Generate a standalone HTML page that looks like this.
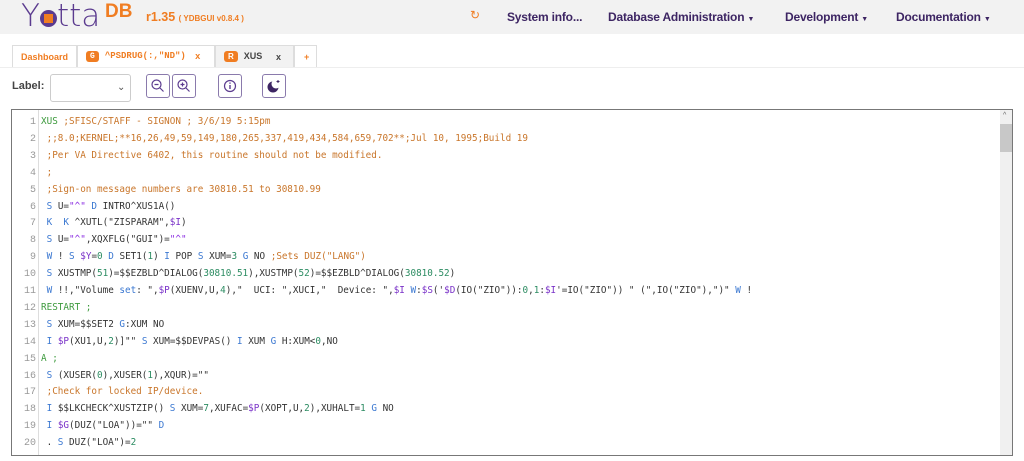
<!DOCTYPE html>
<html><head><style>
*{margin:0;padding:0;box-sizing:border-box}
body{width:1024px;height:461px;background:#fff;font-family:"Liberation Sans",sans-serif;position:relative;overflow:hidden}
.hdr{position:absolute;left:0;top:0;width:1024px;height:34px;background:#f2f2f2}
.logo{position:absolute;left:21px;top:-2px;font-size:31px;color:#5b3b8f;font-family:"DejaVu Sans",sans-serif;font-weight:300;letter-spacing:0px}
.db{position:absolute;left:105px;top:1px;font-size:19px;font-weight:bold;color:#f07d22}
.ver{position:absolute;left:146px;top:10px;font-size:12.5px;font-weight:bold;color:#f07d22}
.ver small{font-size:8px}
.nav{position:absolute;top:10px;font-size:12px;font-weight:bold;color:#3d2563;letter-spacing:-0.2px}
.car{font-size:7px}
.tab{position:absolute;top:45px;height:23px;border:1px solid #ddd;border-bottom:none;font-size:9px;font-weight:bold;color:#f07d22;background:#fff}
.badge{display:inline-block;background:#f07d22;color:#fff;border-radius:3px;font-size:8px;padding:1px 4px;margin-right:6px}
.btn{position:absolute;top:74px;width:24px;height:24px;border:1px solid #8a7aac;border-radius:3px;background:#fff}
.ed{position:absolute;left:11px;top:109px;width:1002px;height:347px;border:1px solid #777}
.gut{position:absolute;left:0;top:0;width:27px;height:100%;border-right:1px solid #ddd;background:#fff}
.ln{position:absolute;left:0;width:24px;text-align:right;font:10px "Liberation Mono",monospace;color:#999;margin-top:1px}
.cd{position:absolute;left:29px;font:9.3px "DejaVu Sans Mono","Liberation Mono",monospace;color:#333;white-space:pre}
.k{color:#3b78d1}.c{color:#c9762b}.l{color:#3d9a3d}.n{color:#2c8c62}.v{color:#7a32c8}.s{color:#8a2be2}
</style></head><body>
<div class="hdr">
<div class="logo">Y<span style="display:inline-block;width:17px;height:17px;background:#5b3b8f;border-radius:50%;vertical-align:-1px;position:relative"><span style="position:absolute;left:4px;top:4px;width:9px;height:9px;background:#f07d22"></span></span>tta</div>
<div class="db">DB</div>
<div class="ver">r1.35 <small>( YDBGUI v0.8.4 )</small></div>
<div class="nav" style="left:470px;color:#f07d22;font-weight:normal;top:8px">↻</div>
<div class="nav" style="left:507px">System info...</div>
<div class="nav" style="left:608px">Database Administration <span class="car">▼</span></div>
<div class="nav" style="left:785px">Development <span class="car">▼</span></div>
<div class="nav" style="left:896px">Documentation <span class="car">▼</span></div>
</div>
<div class="tab" style="left:12px;width:65px;padding:6px 0 0 8px">Dashboard</div>
<div class="tab" style="left:77px;width:138px;padding:5px 0 0 8px;font-family:'Liberation Mono',monospace"><span class="badge">G</span>^PSDRUG(:,"ND")<span style="position:absolute;left:117px;top:6px">x</span></div>
<div class="tab" style="left:215px;width:79px;padding:5px 0 0 8px;background:#f2f2f2;color:#444"><span class="badge">R</span>XUS<span style="position:absolute;left:60px;top:6px">x</span></div>
<div class="tab" style="left:294px;width:23px;padding:6px 0 0 9px">+</div>
<div style="position:absolute;left:0;top:67px;width:1024px;border-top:1px solid #eee"></div>
<div style="position:absolute;left:12px;top:80px;font-size:11px;font-weight:bold;color:#444">Label:</div>
<div style="position:absolute;left:50px;top:74px;width:81px;height:28px;border:1px solid #ccc;border-radius:3px;font-size:10px;color:#555;padding:7px 0 0 66px">⌄</div>
<div class="btn" style="left:146px"><svg width="22" height="22"><circle cx="9.5" cy="9.5" r="4.5" fill="none" stroke="#5b3b8f" stroke-width="1.2"/><path d="M7.5 9.5h4M13 13l3.5 3.5" stroke="#5b3b8f" stroke-width="1.2"/></svg></div>
<div class="btn" style="left:172px"><svg width="22" height="22"><circle cx="9.5" cy="9.5" r="4.5" fill="none" stroke="#5b3b8f" stroke-width="1.2"/><path d="M7.5 9.5h4M9.5 7.5v4M13 13l3.5 3.5" stroke="#5b3b8f" stroke-width="1.2"/></svg></div>
<div class="btn" style="left:218px"><svg width="22" height="22"><circle cx="11" cy="11" r="5.5" fill="none" stroke="#5b3b8f" stroke-width="1.2"/><path d="M11 10v4M11 7.5v1.3" stroke="#5b3b8f" stroke-width="1.4"/></svg></div>
<div class="btn" style="left:262px"><svg width="22" height="22"><circle cx="10" cy="12" r="5.5" fill="#3d2563"/><circle cx="13" cy="9" r="4.5" fill="#fff"/><path d="M15 5v3M13.5 6.5h3" stroke="#3d2563" stroke-width="1"/></svg></div>
<div class="ed">
<div class="gut"></div>
<div style="position:absolute;right:0;top:0;width:12px;height:100%;background:#f0f0f0"><div style="position:absolute;top:2px;left:3px;font-size:7px;color:#666">^</div><div style="position:absolute;top:14px;left:0;width:12px;height:28px;background:#c8c8c8"></div></div>
<div id="c"></div>
</div>
<script>
var L=[
'<span class="l">XUS</span> <span class="c">;SFISC/STAFF - SIGNON ; 3/6/19 5:15pm</span>',
' <span class="c">;;8.0;KERNEL;**16,26,49,59,149,180,265,337,419,434,584,659,702**;Jul 10, 1995;Build 19</span>',
' <span class="c">;Per VA Directive 6402, this routine should not be modified.</span>',
' <span class="c">;</span>',
' <span class="c">;Sign-on message numbers are 30810.51 to 30810.99</span>',
' <span class="k">S</span> U=<span class="s">"^"</span> <span class="k">D</span> INTRO^XUS1A()',
' <span class="k">K</span>  <span class="k">K</span> ^XUTL("ZISPARAM",<span class="v">$I</span>)',
' <span class="k">S</span> U=<span class="s">"^"</span>,XQXFLG("GUI")=<span class="s">"^"</span>',
' <span class="k">W</span> ! <span class="k">S</span> <span class="v">$Y</span>=<span class="n">0</span> <span class="k">D</span> SET1(<span class="n">1</span>) <span class="k">I</span> POP <span class="k">S</span> XUM=<span class="n">3</span> <span class="k">G</span> NO <span class="c">;Sets DUZ("LANG")</span>',
' <span class="k">S</span> XUSTMP(<span class="n">51</span>)=$$EZBLD^DIALOG(<span class="n">30810.51</span>),XUSTMP(<span class="n">52</span>)=$$EZBLD^DIALOG(<span class="n">30810.52</span>)',
' <span class="k">W</span> !!,"Volume <span class="k">set</span>: ",<span class="v">$P</span>(XUENV,U,<span class="n">4</span>),"  UCI: ",XUCI,"  Device: ",<span class="v">$I</span> <span class="k">W</span>:<span class="v">$S</span>(\'<span class="v">$D</span>(IO("ZIO")):<span class="n">0</span>,<span class="n">1</span>:<span class="v">$I</span>\'=IO("ZIO")) " (",IO("ZIO"),")" <span class="k">W</span> !',
'<span class="l">RESTART ;</span>',
' <span class="k">S</span> XUM=$$SET2 <span class="k">G</span>:XUM NO',
' <span class="k">I</span> <span class="v">$P</span>(XU1,U,<span class="n">2</span>)]"" <span class="k">S</span> XUM=$$DEVPAS() <span class="k">I</span> XUM <span class="k">G</span> H:XUM&lt;<span class="n">0</span>,NO',
'<span class="l">A ;</span>',
' <span class="k">S</span> (XUSER(<span class="n">0</span>),XUSER(<span class="n">1</span>),XQUR)=""',
' <span class="c">;Check for locked IP/device.</span>',
' <span class="k">I</span> $$LKCHECK^XUSTZIP() <span class="k">S</span> XUM=<span class="n">7</span>,XUFAC=<span class="v">$P</span>(XOPT,U,<span class="n">2</span>),XUHALT=<span class="n">1</span> <span class="k">G</span> NO',
' <span class="k">I</span> <span class="v">$G</span>(DUZ("LOA"))="" <span class="k">D</span>',
' . <span class="k">S</span> DUZ("LOA")=<span class="n">2</span>'];
var h='';L.forEach(function(t,i){var y=6+i*16.9;h+='<div class="ln" style="top:'+y+'px">'+(i+1)+'</div><div class="cd" style="top:'+y+'px">'+t+'</div>';});
document.getElementById('c').innerHTML=h;
</script>
</body></html>
